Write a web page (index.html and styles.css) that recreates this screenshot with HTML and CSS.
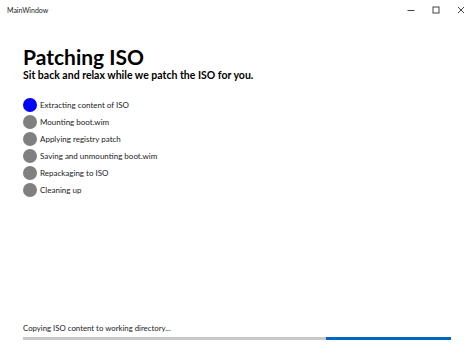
FILE: index.html
```html
<!DOCTYPE html>
<html lang="en">
<head>
  <meta charset="UTF-8">
  <meta name="viewport" content="width=device-width, initial-scale=1.0">
  <title>MainWindow</title>
  <link rel="stylesheet" href="styles.css">
</head>
<body>
  <div class="window">
    <div class="titlebar">
      <span class="title">MainWindow</span>
      <div class="controls">
        <span class="ctl">
          <svg width="8" height="8" viewBox="0 0 8 8"><path d="M0.5 4.5h7" stroke="#444" stroke-width="1"/></svg>
        </span>
        <span class="ctl">
          <svg width="8" height="8" viewBox="0 0 8 8"><rect x="1" y="1" width="6" height="6" fill="none" stroke="#444" stroke-width="1"/></svg>
        </span>
        <span class="ctl">
          <svg width="8" height="8" viewBox="0 0 8 8"><path d="M1 1l6 6M7 1l-6 6" stroke="#444" stroke-width="1"/></svg>
        </span>
      </div>
    </div>

    <div class="content">
      <h1>Patching ISO</h1>
      <p class="subtitle">Sit back and relax while we patch the ISO for you.</p>

      <ul class="steps">
        <li class="active"><span class="dot"></span>Extracting content of ISO</li>
        <li><span class="dot"></span>Mounting boot.wim</li>
        <li><span class="dot"></span>Applying registry patch</li>
        <li><span class="dot"></span>Saving and unmounting boot.wim</li>
        <li><span class="dot"></span>Repackaging to ISO</li>
        <li><span class="dot"></span>Cleaning up</li>
      </ul>
    </div>

    <div class="footer">
      <div class="status">Copying ISO content to working directory...</div>
      <div class="progress">
        <div class="bar" style="margin-left: 70.8%; width: 29.2%"></div>
      </div>
    </div>
  </div>
</body>
</html>
```

FILE: styles.css
```css
* {
  box-sizing: border-box;
}
body {
  margin: 0;
  font-family: Lato, 'Open Sans', sans-serif;
  background: #fff;
  color: #000;
}
.window {
  display: flex;
  flex-direction: column;
  height: 362px;
}
.titlebar {
  display: flex;
  justify-content: space-between;
  align-items: center;
  height: 19px;
  padding-left: 7px;
}
.title {
  font-size: 7px;
  color: #222;
}
.controls {
  display: flex;
  padding-right: 1px;
}
.ctl {
  display: flex;
  justify-content: center;
  align-items: center;
  width: 25px;
  height: 19px;
}
.content {
  flex: 1;
  padding: 25px 23px 0;
}
h1 {
  margin: 0;
  font-size: 21px;
  font-weight: 700;
  line-height: 25px;
}
.subtitle {
  margin: 0;
  font-size: 10.5px;
  font-weight: 700;
  line-height: 13px;
}
.steps {
  list-style: none;
  margin: 14px 0 0;
  padding: 0;
}
.steps li {
  display: flex;
  align-items: center;
  height: 17px;
  font-size: 8px;
  color: #222;
}
.dot {
  width: 14px;
  height: 14px;
  border-radius: 50%;
  background: #808080;
  margin-right: 3px;
}
.steps li.active .dot {
  background: #0000ff;
}
.footer {
  padding: 0 23px 22px;
}
.status {
  font-size: 7.8px;
  color: #222;
  margin-bottom: 4px;
}
.progress {
  height: 3px;
  background: #c8c8c8;
}
.bar {
  height: 3px;
  background: #0067c0;
}
```
